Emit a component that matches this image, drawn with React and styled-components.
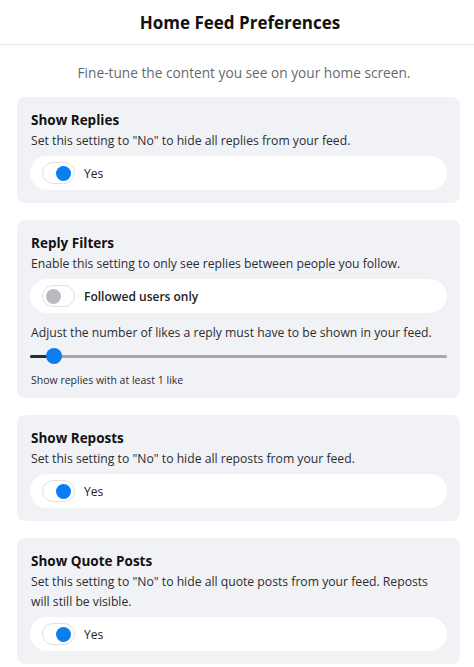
import styled, { createGlobalStyle } from 'styled-components';

const GlobalStyle = createGlobalStyle`
  * { box-sizing: border-box; }
  body {
    margin: 0;
    background: #ffffff;
    font-family: "Open Sans", "Noto Sans", sans-serif;
    color: #111;
  }
`;

const Page = styled.div`
  width: 474px;
  min-height: 667px;
  background: #fff;
`;

const Header = styled.header`
  height: 45px;
  display: flex;
  align-items: center;
  justify-content: center;
  padding-left: 6px;
  border-bottom: 1px solid #e6e6e9;
`;

const Title = styled.h1`
  margin: 0;
  font-size: 17px;
  font-weight: 700;
  color: #111;
`;

const Subtitle = styled.p`
  margin: 18px 0 15px;
  padding-left: 14px;
  text-align: center;
  font-size: 13.7px;
  color: #666a70;
`;

const Cards = styled.div`
  display: flex;
  flex-direction: column;
  gap: 17px;
  padding: 0 14px 0 17px;
`;

const Card = styled.section`
  background: #f1f2f6;
  border-radius: 8px;
  padding: 13px 13px 13px 14px;
`;

const CardTitle = styled.h2`
  margin: 0;
  font-size: 13.5px;
  font-weight: 700;
  line-height: 20px;
  color: #111;
`;

const CardText = styled.p`
  margin: 1px 0 0;
  font-size: 12.2px;
  line-height: 20px;
  color: #2b2d31;
`;

const ToggleRow = styled.div`
  margin-top: 5px;
  margin-left: -1px;
  height: 34px;
  background: #fff;
  border-radius: 17px;
  display: flex;
  align-items: center;
  padding-left: 12px;
  gap: 9px;
`;

const Track = styled.span`
  width: 33px;
  height: 22px;
  border-radius: 11px;
  border: 1px solid #e1e2e6;
  background: #fff;
  display: flex;
  align-items: center;
  justify-content: ${({ $on }) => ($on ? 'flex-end' : 'flex-start')};
  padding: 0 3px;
`;

const Knob = styled.span`
  width: 15px;
  height: 15px;
  border-radius: 50%;
  background: ${({ $on }) => ($on ? '#0a7ef0' : '#b9bbc1')};
`;

const ToggleLabel = styled.span`
  font-size: 12px;
  font-weight: ${({ $strong }) => ($strong ? 600 : 400)};
  color: #222;
`;

const SliderText = styled(CardText)`
  margin-top: 10px;
`;

const Slider = styled.div`
  position: relative;
  height: 20px;
  margin-top: 3px;
  margin-left: -1px;
  display: flex;
  align-items: center;
`;

const Rail = styled.div`
  width: 100%;
  height: 3px;
  border-radius: 2px;
  background: #a6a8ad;
`;

const Fill = styled.div`
  position: absolute;
  left: 0;
  height: 3px;
  border-radius: 2px;
  background: #2a2b2e;
`;

const Thumb = styled.div`
  position: absolute;
  width: 16px;
  height: 16px;
  border-radius: 50%;
  background: #0a7ef0;
  transform: translateX(-50%);
`;

const Hint = styled.p`
  margin: 7px 0 -2px;
  font-size: 10.5px;
  line-height: 14px;
  color: #2b2d31;
`;

function Toggle({ on, label, strong }) {
  return (
    <ToggleRow>
      <Track $on={on}>
        <Knob $on={on} />
      </Track>
      <ToggleLabel $strong={strong}>{label}</ToggleLabel>
    </ToggleRow>
  );
}

export default function App() {
  const pct = 24;
  return (
    <Page>
      <GlobalStyle />
      <Header>
        <Title>Home Feed Preferences</Title>
      </Header>
      <Subtitle>Fine-tune the content you see on your home screen.</Subtitle>
      <Cards>
        <Card>
          <CardTitle>Show Replies</CardTitle>
          <CardText>Set this setting to "No" to hide all replies from your feed.</CardText>
          <Toggle on label="Yes" />
        </Card>
        <Card>
          <CardTitle>Reply Filters</CardTitle>
          <CardText>Enable this setting to only see replies between people you follow.</CardText>
          <Toggle on={false} label="Followed users only" strong />
          <SliderText>Adjust the number of likes a reply must have to be shown in your feed.</SliderText>
          <Slider>
            <Rail />
            <Fill style={{ width: pct + 'px' }} />
            <Thumb style={{ left: pct + 'px' }} />
          </Slider>
          <Hint>Show replies with at least 1 like</Hint>
        </Card>
        <Card>
          <CardTitle>Show Reposts</CardTitle>
          <CardText>Set this setting to "No" to hide all reposts from your feed.</CardText>
          <Toggle on label="Yes" />
        </Card>
        <Card>
          <CardTitle>Show Quote Posts</CardTitle>
          <CardText>Set this setting to "No" to hide all quote posts from your feed. Reposts will still be visible.</CardText>
          <Toggle on label="Yes" />
        </Card>
      </Cards>
    </Page>
  );
}
